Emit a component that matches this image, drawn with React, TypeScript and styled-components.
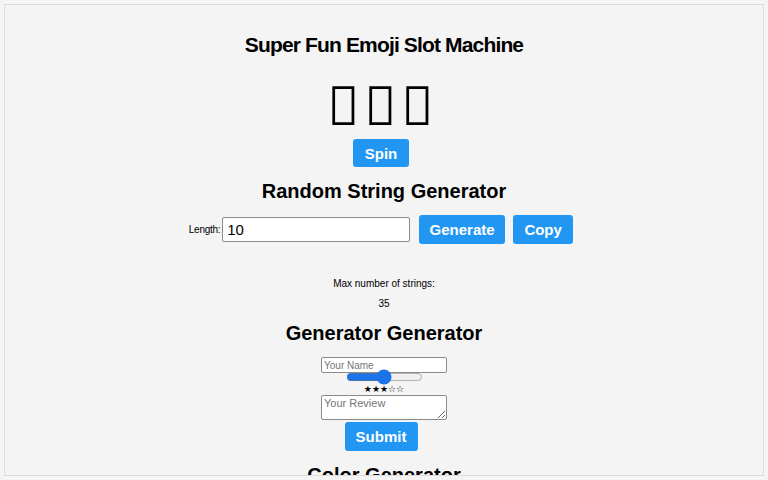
import React, { useState } from 'react';
import styled, { createGlobalStyle } from 'styled-components';

const GlobalStyle = createGlobalStyle`
  html, body {
    margin: 0;
    background: #f4f4f4;
    font-family: 'Liberation Sans', Arial, sans-serif;
  }
`;

const Frame = styled.div`
  margin: 4px;
  height: 470px;
  border: 1px solid #dcdcdc;
  background: #f4f4f4;
  overflow: hidden;
  display: flex;
  flex-direction: column;
  align-items: center;
  color: #000;

  & > * {
    flex-shrink: 0;
  }
`;

const Title = styled.h1`
  margin: 28px 0 0;
  font-size: 21px;
  font-weight: bold;
  line-height: 24px;
  letter-spacing: -0.85px;
`;

const Heading = styled.h2<{ $top: number }>`
  margin: ${p => p.$top}px 0 0;
  font-size: 20px;
  font-weight: bold;
  line-height: 24px;
`;

const Reels = styled.div`
  margin-top: 19px;
  padding-right: 7px;
  height: 56px;
  display: flex;
  font-family: 'Noto Sans', sans-serif;
  font-size: 54px;
  line-height: 56px;
`;

const Reel = styled.span`
  display: block;
  width: 37px;
  text-align: center;
`;

const Button = styled.button<{ $w: number; $h: number }>`
  width: ${p => p.$w}px;
  height: ${p => p.$h}px;
  margin-right: 6px;
  padding: 0;
  border: none;
  border-radius: 3px;
  background: #2196f3;
  color: #fff;
  font-family: 'Liberation Sans', Arial, sans-serif;
  font-size: 15px;
  font-weight: bold;
  cursor: pointer;
`;

const Row = styled.div`
  margin-top: 12px;
  display: flex;
  align-items: center;
`;

const Label = styled.label`
  font-size: 10px;
  letter-spacing: -0.3px;
  margin-right: 2px;
`;

const LengthInput = styled.input`
  box-sizing: border-box;
  width: 188px;
  height: 25px;
  border: 1px solid #8a8a8a;
  border-radius: 2px;
  padding: 0 4px;
  font-family: 'Liberation Sans', Arial, sans-serif;
  font-size: 15px;
  background: #fff;
  margin-right: 9px;
`;

const Small = styled.p<{ $top: number }>`
  margin: ${p => p.$top}px 0 0;
  font-size: 10px;
  line-height: 12px;
`;

const Field = styled.input`
  box-sizing: border-box;
  width: 126px;
  height: 16px;
  margin-top: 12px;
  border: 1px solid #8a8a8a;
  border-radius: 2px;
  padding: 0 2px;
  font-family: 'Liberation Sans', Arial, sans-serif;
  font-size: 10px;
  background: #fff;
`;

const Slider = styled.input`
  width: 77px;
  height: 8px;
  margin: 0;
  accent-color: #1a73e8;
`;

const Stars = styled.div`
  margin-top: 3px;
  font-family: 'DejaVu Sans', sans-serif;
  font-size: 9px;
  line-height: 11px;
`;

const Review = styled.textarea`
  box-sizing: border-box;
  width: 126px;
  height: 25px;
  margin-top: 0;
  border: 1px solid #8a8a8a;
  border-radius: 2px;
  padding: 1px 2px;
  font-family: 'Liberation Sans', Arial, sans-serif;
  font-size: 11px;
  background: #fff;
  resize: vertical;
`;

const ButtonSlot = styled.div<{ $top: number }>`
  margin-top: ${p => p.$top}px;
`;

const reels = ['\uE000', '\uE001', '\uE002'];

const App: React.FC = () => {
  const [len, setLen] = useState('10');
  const [rating, setRating] = useState(3);

  return (
    <>
      <GlobalStyle />
      <Frame>
        <Title>Super Fun Emoji Slot Machine</Title>
        <Reels>
          {reels.map((r, i) => (
            <Reel key={i}>{r}</Reel>
          ))}
        </Reels>
        <ButtonSlot $top={7}>
          <Button $w={56} $h={28}>Spin</Button>
        </ButtonSlot>
        <Heading $top={12}>Random String Generator</Heading>
        <Row>
          <Label>Length:</Label>
          <LengthInput value={len} onChange={e => setLen(e.target.value)} />
          <Button $w={86} $h={29} style={{ marginRight: 8 }}>Generate</Button>
          <Button $w={60} $h={29}>Copy</Button>
        </Row>
        <Small $top={34}>Max number of strings:</Small>
        <Small $top={8}>35</Small>
        <Heading $top={11}>Generator Generator</Heading>
        <Field placeholder="Your Name" />
        <Slider
          type="range"
          min={1}
          max={5}
          value={rating}
          onChange={e => setRating(Number(e.target.value))}
        />
        <Stars>{'★'.repeat(rating) + '☆'.repeat(5 - rating)}</Stars>
        <Review placeholder="Your Review" />
        <ButtonSlot $top={2}>
          <Button $w={73} $h={29}>Submit</Button>
        </ButtonSlot>
        <Heading $top={12}>Color Generator</Heading>
      </Frame>
    </>
  );
};

export default App;
